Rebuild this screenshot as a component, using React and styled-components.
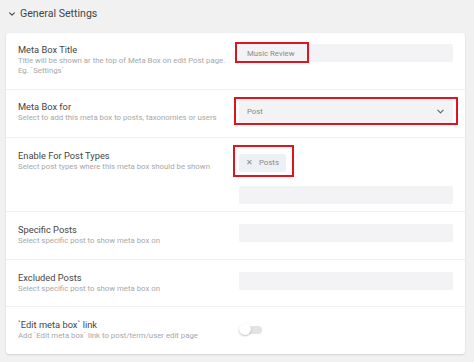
import styled, { createGlobalStyle } from 'styled-components'

const Global = createGlobalStyle`
  body {
    margin: 0;
    background: #f1f1f1;
    font-family: Roboto, "Liberation Sans", sans-serif;
  }
  * { box-sizing: border-box; }
`

const Page = styled.div`
  width: 474px;
  height: 362px;
  overflow: hidden;
`

const Header = styled.div`
  display: flex;
  align-items: center;
  gap: 4px;
  height: 27px;
  padding-left: 8px;
  color: #444;
  font-size: 10.6px;
`

const Card = styled.div`
  margin: 6px 9px 0 6px;
  background: #fff;
  border-radius: 3px;
  box-shadow: 0 1px 2px rgba(0, 0, 0, 0.12), 0 0 1px rgba(0, 0, 0, 0.08);
`

const Row = styled.div`
  display: grid;
  grid-template-columns: 221px 1fr;
  padding: ${p => p.$pad || '12px'} 12px 0;
  min-height: ${p => p.$h}px;
  border-top: 1px solid #f0f0f0;
  &:first-child { border-top: none; }
`

const Label = styled.div`
  font-size: 9.3px;
  line-height: 12px;
  color: #454545;
`

const Desc = styled.div`
  font-size: 7.8px;
  line-height: 10px;
  color: #a8a8a8;
`

const Field = styled.div`
  display: flex;
  flex-direction: column;
  gap: ${p => p.$gap || 0}px;
  align-items: flex-start;
`

const Wrap = styled.div`
  position: relative;
  width: ${p => p.$w || '100%'};
  margin-top: ${p => p.$mt || 0}px;
`

const Input = styled.div`
  height: ${p => p.$h || 18}px;
  width: 100%;
  background: #f3f3f5;
  border-radius: 2px;
  display: flex;
  align-items: center;
  justify-content: space-between;
  padding: 0 8px;
  font-size: 7.8px;
  color: #8a8a8a;
`

const Mark = styled.div`
  position: absolute;
  top: ${p => p.$t}px;
  left: ${p => p.$l}px;
  right: ${p => p.$r}px;
  bottom: ${p => p.$b}px;
  border: 2px solid #e0141e;
  pointer-events: none;
`

const Tag = styled.div`
  display: inline-flex;
  align-items: center;
  gap: 6px;
  height: 18px;
  padding: 0 7px;
  background: #eef1f4;
  border-radius: 2px;
  font-size: 7.8px;
  color: #8a8a8a;
`

const Toggle = styled.div`
  position: relative;
  width: 24px;
  height: 14px;
  margin-top: 4px;
`

const Track = styled.div`
  position: absolute;
  left: 6px;
  top: 3px;
  width: 17px;
  height: 8px;
  border-radius: 4px;
  background: #e3e3e3;
`

const Knob = styled.div`
  position: absolute;
  left: 0;
  top: 0;
  width: 12px;
  height: 12px;
  border-radius: 50%;
  background: #fff;
  box-shadow: 0 1px 2px rgba(0, 0, 0, 0.25);
`

const Chevron = ({ size = 8, color = '#555' }) => (
  <svg width={size} height={size} viewBox="0 0 10 10" fill="none">
    <path d="M2 3.5 L5 6.5 L8 3.5" stroke={color} strokeWidth="1.3" strokeLinecap="round" strokeLinejoin="round" />
  </svg>
)

const Setting = ({ label, desc }) => (
  <div>
    <Label>{label}</Label>
    {desc.map((d, i) => <Desc key={i}>{d}</Desc>)}
  </div>
)

export default function App() {
  return (
    <Page>
      <Global />
      <Header>
        <Chevron size={8} color="#444" />
        General Settings
      </Header>
      <Card>
        <Row $h={56} $pad="11px">
          <Setting
            label="Meta Box Title"
            desc={['Title will be shown ar the top of Meta Box on edit Post page.', 'Eg. `Settings`']}
          />
          <Field>
            <Wrap>
              <Input>Music Review</Input>
              <Mark $t={-2} $l={-4} $r={144} $b={-1} />
            </Wrap>
          </Field>
        </Row>
        <Row $h={48} $pad="11px">
          <Setting label="Meta Box for" desc={['Select to add this meta box to posts, taxonomies or users']} />
          <Field>
            <Wrap $mt={-2}>
              <Input $h={24}>
                Post
                <Chevron size={9} color="#666" />
              </Input>
              <Mark $t={-2} $l={-5} $r={-5} $b={-2} />
            </Wrap>
          </Field>
        </Row>
        <Row $h={74}>
          <Setting label="Enable For Post Types" desc={['Select post types where this meta box should be shown']} />
          <Field $gap={14}>
            <Wrap $w="auto">
              <Tag>
                <span>✕</span>
                Posts
              </Tag>
              <Mark $t={-5} $l={-6} $r={-8} $b={-5} />
            </Wrap>
            <Input />
          </Field>
        </Row>
        <Row $h={48}>
          <Setting label="Specific Posts" desc={['Select specific post to show meta box on']} />
          <Field>
            <Input />
          </Field>
        </Row>
        <Row $h={47}>
          <Setting label="Excluded Posts" desc={['Select specific post to show meta box on']} />
          <Field>
            <Input />
          </Field>
        </Row>
        <Row $h={48}>
          <Setting label="`Edit meta box` link" desc={['Add `Edit meta box` link to post/term/user edit page']} />
          <Field>
            <Toggle>
              <Track />
              <Knob />
            </Toggle>
          </Field>
        </Row>
      </Card>
    </Page>
  )
}
